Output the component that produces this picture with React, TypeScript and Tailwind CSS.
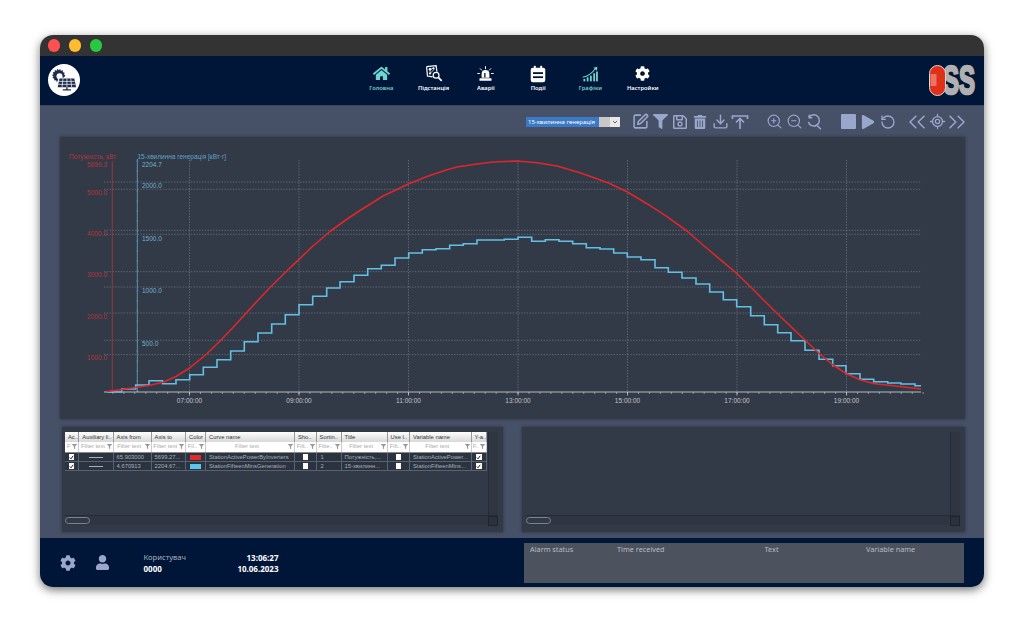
import React from "react";
import { FaCog, FaFilter, FaHome, FaPlay, FaRegSave, FaTrashAlt, FaUser } from "react-icons/fa";
import {
  ChevronsLeft,
  ChevronsRight,
  Download,
  LocateFixed,
  RotateCcw,
  SquarePen,
  ZoomIn,
  ZoomOut,
} from "lucide-react";

// Nav icons that the icon packs don't have
const SubstationIcon = () => (
  <svg width="19" height="19" viewBox="0 0 22 22" fill="none" stroke="#fff">
    <path d="M3 3l11-1 1 7M3 3l1 11 6 1" strokeWidth="1.4" />
    <circle cx="7" cy="6" r="1.5" fill="#fff" stroke="none" />
    <circle cx="11" cy="5" r="1.3" fill="#fff" stroke="none" />
    <circle cx="7" cy="11" r="1.3" fill="#fff" stroke="none" />
    <path d="M7 6l4-1M7 6l0 5M7 11l5-5" strokeWidth="0.8" />
    <circle cx="14" cy="13" r="3.4" strokeWidth="1.4" />
    <path d="M16.5 15.5l4 4" strokeWidth="2" />
  </svg>
);

const SirenIcon = () => (
  <svg width="19" height="19" viewBox="0 0 22 22" fill="#fff" stroke="none">
    <path d="M6.5 16v-4.5a4.5 4.5 0 0 1 9 0V16z" />
    <rect x="4" y="16.5" width="14" height="3" rx="0.5" />
    <path d="M11 2.5v3.5M4.5 5l2.4 2.4M17.5 5l-2.4 2.4M1.5 11h3M17.5 11h3" stroke="#fff" strokeWidth="1.1" />
    <path d="M9.5 10.5h1.5v5h-1.5z" fill="#001638" />
  </svg>
);

const EventsIcon = () => (
  <svg width="20" height="20" viewBox="0 0 22 22">
    <rect x="3" y="4" width="16" height="16" rx="2.4" fill="#fff" />
    <rect x="6.5" y="2" width="2" height="4" rx="0.6" fill="#fff" />
    <rect x="13.5" y="2" width="2" height="4" rx="0.6" fill="#fff" />
    <rect x="5.5" y="9" width="11" height="2" fill="#001638" />
    <rect x="5.5" y="13.5" width="11" height="2" fill="#001638" />
  </svg>
);

const GraphIcon = () => (
  <svg width="18" height="18" viewBox="0 0 22 22">
    <rect x="3" y="17" width="2.2" height="3" fill="#6fd3cf" />
    <rect x="7" y="15" width="2.2" height="5" fill="#6fd3cf" />
    <rect x="11" y="13" width="2.2" height="7" fill="#6fd3cf" />
    <rect x="15" y="10" width="2.2" height="10" fill="#6fd3cf" />
    <rect x="18.4" y="8" width="2.2" height="12" fill="#6fd3cf" />
    <path d="M2 15c6-1 11-4 16-11" fill="none" stroke="#6fd3cf" strokeWidth="1.3" />
    <path d="M15 3.5l5-1.5-.5 5z" fill="#6fd3cf" />
  </svg>
);

const SolarLogo = () => (
  <svg width="32" height="32" viewBox="0 0 32 32">
    <circle cx="10.7" cy="11.5" r="5.6" fill="#1c2c4c" />
    <circle cx="10.7" cy="11.5" r="5.6" fill="none" stroke="#1c2c4c" strokeWidth="1.6" strokeDasharray="1.2 1.2" />
    <circle cx="11.5" cy="12.3" r="3" fill="#fff" />
    <path d="M10.5 13.5h16.5l2.2 10.5H8.3z" fill="#fff" />
    <path d="M11.5 14.5h14.8l1.8 8.7H9.7z" fill="#1c2c4c" />
    <path d="M10.8 17.4h15.8M10.2 20.3h17M15 14.5l-1 8.7M18.9 14.5v8.7M22.7 14.5l1 8.7" stroke="#fff" strokeWidth="0.7" />
    <path d="M18.2 23.2h1.4v2.2h-1.4zM14.8 25.2h8.2v1.2h-8.2z" fill="#1c2c4c" />
  </svg>
);

const OssLogo = () => (
  <svg width="46" height="32" viewBox="0 0 46 32" className="overflow-visible">
    <text
      transform="translate(14 29) scale(0.6 1)"
      fontSize="40"
      fontWeight="700"
      fontFamily="'Liberation Sans', sans-serif"
      fill="#b0b0b0"
      stroke="#b0b0b0"
      strokeWidth="2.6"
    >
      SS
    </text>
    <rect x="0.5" y="0.5" width="16" height="30" rx="8" fill="#e0301a" stroke="#d8d8d8" />
    <path d="M1.5 10h6M1.5 12h6M1.5 14h6M1.5 16h6M1.5 18h6M1.5 20h6" stroke="#f4b8a8" strokeWidth="1" />
  </svg>
);

const UploadIcon = () => (
  <svg width="18" height="18" viewBox="0 0 18 18" fill="none" stroke="#9ba6cc" strokeWidth="1.7">
    <path d="M1.5 6V3h15v3" />
    <path d="M9 16V6M5 9.5L9 5.5l4 4" />
  </svg>
);

const ZoomResetIcon = () => (
  <svg width="18" height="18" viewBox="0 0 18 18" fill="none" stroke="#9ba6cc" strokeWidth="1.5">
    <path d="M4 4.5A5.6 5.6 0 1 1 3.4 9" />
    <path d="M4.2 1.8v3h3" />
    <path d="M12.2 12.4l3.6 3.8" />
  </svg>
);

const navItems = [
  { label: "Головна", icon: <FaHome size={17} color="#6fd3cf" />, active: true },
  { label: "Підстанція", icon: <SubstationIcon /> },
  { label: "Аварії", icon: <SirenIcon /> },
  { label: "Події", icon: <EventsIcon /> },
  { label: "Графіки", icon: <GraphIcon />, active: true },
  { label: "Настройки", icon: <FaCog size={15} color="#fff" /> },
];

const TOOL = "#9ba6cc";
const ToolButton = ({ children }: { children: React.ReactNode }) => (
  <div className="w-[20px] h-[20px] flex items-center justify-center">{children}</div>
);

const Toolbar = () => (
  <div className="h-[31px] flex items-center justify-end mr-[-2px] shrink-0">
    {/* curve selector */}
    <div className="w-[94px] h-[10px] bg-[#e8e8e8] flex items-center mr-[10px]">
      <span className="w-[73px] h-full bg-[#3a79c5] text-white text-[6px] leading-[10px] pl-[2px] whitespace-nowrap overflow-hidden">
        15-хвилинна генерація
      </span>
      <span className="w-[11px] h-full bg-[#c8c8c8]" />
      <svg width="10" height="10" viewBox="0 0 10 10" fill="none" stroke="#666">
        <path d="M3 4l2 2 2-2" />
      </svg>
    </div>
    <div className="flex items-center mr-[14px]">
      <ToolButton><SquarePen size={17} color={TOOL} strokeWidth={2.2} /></ToolButton>
      <ToolButton><FaFilter size={15} color={TOOL} /></ToolButton>
      <ToolButton><FaRegSave size={16} color={TOOL} /></ToolButton>
      <ToolButton><FaTrashAlt size={14} color={TOOL} /></ToolButton>
      <ToolButton><Download size={17} color={TOOL} strokeWidth={2} /></ToolButton>
      <ToolButton><UploadIcon /></ToolButton>
    </div>
    <div className="flex items-center mr-[14px]">
      <ToolButton><ZoomIn size={17} color={TOOL} strokeWidth={1.6} /></ToolButton>
      <ToolButton><ZoomOut size={17} color={TOOL} strokeWidth={1.6} /></ToolButton>
      <ToolButton><ZoomResetIcon /></ToolButton>
    </div>
    <div className="flex items-center mr-[9px]">
      <ToolButton><div className="w-[15px] h-[15px] bg-[#9ba6cc] rounded-[1px]" /></ToolButton>
      <ToolButton><FaPlay size={14} color={TOOL} /></ToolButton>
      <ToolButton><RotateCcw size={16} color={TOOL} strokeWidth={2} /></ToolButton>
    </div>
    <div className="flex items-center">
      <ToolButton><ChevronsLeft size={28} color={TOOL} strokeWidth={1.3} className="shrink-0" /></ToolButton>
      <ToolButton><LocateFixed size={17} color={TOOL} strokeWidth={1.8} /></ToolButton>
      <ToolButton><ChevronsRight size={28} color={TOOL} strokeWidth={1.3} className="shrink-0" /></ToolButton>
    </div>
  </div>
);

// chart data, in picture coordinates
const bluePoints: [number, number][] = [
  [107, 391], [121.7, 388], [135.7, 384], [149, 379.7], [162.5, 382.7], [176, 378.7], [189.7, 373.7],
  [203.3, 366.3], [217, 358.7], [230.7, 350], [244.3, 340.7], [258, 332], [271.7, 323], [285.3, 313.7],
  [299, 303.7], [312.7, 295.3], [326.7, 287], [340, 280.7], [354, 274.3], [367.7, 267.7], [381.3, 264.3],
  [395, 257], [408.7, 252], [422.3, 248.7], [436, 247.7], [449.7, 244.3], [463.3, 242.7], [477, 239],
  [490.7, 239], [504.3, 238.3], [518, 236.3], [531.7, 240.3], [545.3, 238.7], [559, 240.3], [572.7, 242.7],
  [586.3, 246.7], [600, 248], [613.7, 252], [627.3, 256], [641, 258.7], [655, 266.7], [668.3, 271.3],
  [682, 277], [696, 283], [709.7, 291], [723.3, 298.7], [736.7, 305.7], [750.7, 314.7], [764.3, 323.7],
  [777.7, 331.7], [791, 339.7], [805, 349.3], [819, 358.3], [832.7, 364.7], [846, 372.7], [860, 378.3],
  [873.7, 380.7], [887.7, 382], [901, 383], [915, 384.7],
];
const bluePath =
  bluePoints.map(([x, y], i) => (i === 0 ? `M${x} ${y}` : `H${x}V${y}`)).join("") + "H921";

const redPoints =
  "107,390.5 122,388.5 136.7,386.3 150,384.3 163,381.2 176,375.5 190,366.7 206.7,353 220,340 233,326.5 246.7,311.5 " +
  "256.7,300.5 270,286.5 286.7,270 299,258.3 313,245 330,230.5 345,219.5 360,209.5 368,204.5 383,195 397,188.5 " +
  "408.3,183 427,175.5 447,168.8 457,166 477,163 493,161 517,160 537,161.7 557,165 580,171.7 608,181.7 " +
  "627,190.7 647,202.7 667,215.7 687,230 703,244 720,258.3 737,272.7 753,288.3 763,298.5 785,320 805,339 819,352.5 " +
  "833,364 846.7,372.7 860,378.7 873,382.5 900,385.5 921,388";

const hours = [
  { x: 189.5, t: "07:00:00" },
  { x: 299, t: "09:00:00" },
  { x: 408.5, t: "11:00:00" },
  { x: 518, t: "13:00:00" },
  { x: 627.5, t: "15:00:00" },
  { x: 737, t: "17:00:00" },
  { x: 846.5, t: "19:00:00" },
];
const gridY = [181, 188.3, 229.3, 233.3, 270.7, 286, 312, 339.3, 353.6];
const redLabels = [
  { y: 165.5, t: "5699.3" },
  { y: 194, t: "5000.0" },
  { y: 235, t: "4000.0" },
  { y: 276, t: "3000.0" },
  { y: 317.5, t: "2000.0" },
  { y: 359, t: "1000.0" },
];
const blueLabels = [
  { y: 165.5, t: "2204.7" },
  { y: 186.5, t: "2000.0" },
  { y: 239.5, t: "1500.0" },
  { y: 292, t: "1000.0" },
  { y: 345, t: "500.0" },
];
const xTicks = Array.from({ length: 75 }, (_, i) => 112.9 + i * 10.95);
const axisTicks = Array.from({ length: 24 }, (_, i) => 160 + i * 10);

const Chart = () => (
  <div className="h-[282px] bg-[#333a47] shrink-0 shadow-[0_0_3px_rgba(30,35,45,0.6)]">
    <svg
      width="905"
      height="282"
      viewBox="60 136 905 282"
      fontFamily="'Liberation Sans', Arial, sans-serif"
      fontSize="6.5"
    >
      {gridY.map((y) => (
        <line key={y} x1="104" x2="921" y1={y} y2={y} stroke="#6a7280" strokeWidth="0.8" strokeDasharray="1.4 1.4" />
      ))}
      {hours.map((h) => (
        <line key={h.x} x1={h.x} x2={h.x} y1="159" y2="391" stroke="#6a7280" strokeWidth="0.8" strokeDasharray="1.4 1.4" />
      ))}
      <line x1="112.3" x2="112.3" y1="160" y2="391" stroke="#a8323a" strokeWidth="0.9" />
      <line x1="137.3" x2="137.3" y1="158" y2="391" stroke="#5c9fc0" strokeWidth="0.9" />
      {axisTicks.map((y) => (
        <line key={y} x1="136.3" x2="138.3" y1={y} y2={y} stroke="#5c9fc0" strokeWidth="0.5" />
      ))}
      <line x1="104" x2="921" y1="391" y2="391" stroke="#c4c8ce" strokeWidth="0.9" />
      {xTicks.map((x) => (
        <line key={x} x1={x} x2={x} y1="391" y2="393" stroke="#c4c8ce" strokeWidth="0.6" />
      ))}
      {hours.map((h) => (
        <line key={h.x} x1={h.x} x2={h.x} y1="391" y2="394.5" stroke="#c4c8ce" strokeWidth="0.8" />
      ))}

      <path d={bluePath} fill="none" stroke="#62c0e6" strokeWidth="1.6" />
      <polyline points={redPoints} fill="none" stroke="#e0262c" strokeWidth="1.6" strokeLinejoin="round" />

      <text x="69" y="157.5" fill="#b5343c">Потужність, кВт</text>
      <text x="137.5" y="157.5" fill="#5fa3c4">15-хвилинна генерація [кВт·г]</text>
      {redLabels.map((l) => (
        <text key={l.t} x="107" y={l.y} textAnchor="end" fill="#b5343c">{l.t}</text>
      ))}
      {blueLabels.map((l) => (
        <text key={l.t} x="142" y={l.y} fill="#6fb0cf">{l.t}</text>
      ))}
      {hours.map((h) => (
        <text key={h.t} x={h.x} y="402" textAnchor="middle" fill="#c0c4cc">{h.t}</text>
      ))}
    </svg>
  </div>
);

const COLS = "grid grid-cols-[14.3px_34.3px_38px_34.4px_20px_89px_21.6px_25px_46px_22.4px_61.6px_15.4px]";

const headers = ["Ac..", "Auxiliary li..", "Axis from", "Axis to", "Color", "Curve name", "Sho..", "Sortin..", "Title", "Use l..", "Variable name", "Y-a.."];
const filters = ["F", "Filter text", "Filter text", "Filter text", "Fil..", "Filter text", "Filt..", "Filte..", "Filter text", "Filt..", "Filter text", "F.."];

const Check = ({ on }: { on?: boolean }) => (
  <div className="w-[5.5px] h-[5.5px] bg-white flex items-center justify-center">
    {on && (
      <svg width="5" height="5" viewBox="0 0 5 5" fill="none" stroke="#222" strokeWidth="1">
        <path d="M0.8 2.5l1.2 1.3 2.2-3" />
      </svg>
    )}
  </div>
);

const rows = [
  {
    from: "65.903000",
    to: "5699.27...",
    color: "bg-[#e02a2a]",
    name: "StationActivePowerByInverters",
    sort: "1",
    title: "Потужність,...",
    variable: "StationActivePower...",
  },
  {
    from: "4.670913",
    to: "2204.67...",
    color: "bg-[#5cc6ee]",
    name: "StationFifteenMinsGeneration",
    sort: "2",
    title: "15-хвилинн...",
    variable: "StationFifteenMins...",
  },
];

const CELL = "border-r border-[#5a6270] flex items-center overflow-hidden whitespace-nowrap";

const CurveTable = () => (
  <div className="w-[422px] text-[5.8px] font-['Liberation_Sans',sans-serif]">
    <div className={`${COLS} h-[10px] bg-gradient-to-b from-white to-[#d8d8d8] text-[#333]`}>
      {headers.map((h, i) => (
        <div key={i} className="border-r border-[#999] pl-[3px] overflow-hidden whitespace-nowrap leading-[10px]">
          {h}
        </div>
      ))}
    </div>
    <div className={`${COLS} h-[11.5px] bg-white text-[#aaa] border-b border-[#888]`}>
      {filters.map((f, i) => (
        <div key={i} className="border-r border-[#ccc] flex items-center pr-[1px] overflow-hidden whitespace-nowrap">
          <span className="flex-1 min-w-0 text-center overflow-hidden">{f}</span>
          <FaFilter size={5} color="#999" className="shrink-0" />
        </div>
      ))}
    </div>
    {rows.map((r) => (
      <div key={r.sort} className={`${COLS} h-[9px] bg-[#2b3240] text-[#a8b0bc] border-b border-[#5a6270]`}>
        <div className={`${CELL} justify-center`}><Check on /></div>
        <div className={`${CELL} justify-center`}><div className="w-[14px] h-px bg-[#a8b0bc]" /></div>
        <div className={`${CELL} pl-[3px]`}>{r.from}</div>
        <div className={`${CELL} pl-[3px]`}>{r.to}</div>
        <div className={`${CELL} justify-center`}><div className={`w-[11px] h-[5px] ${r.color}`} /></div>
        <div className={`${CELL} pl-[3px]`}>{r.name}</div>
        <div className={`${CELL} justify-center`}><Check /></div>
        <div className={`${CELL} pl-[4px]`}>{r.sort}</div>
        <div className={`${CELL} pl-[3px]`}>{r.title}</div>
        <div className={`${CELL} justify-center`}><Check /></div>
        <div className={`${CELL} pl-[3px]`}>{r.variable}</div>
        <div className={`${CELL} justify-center`}><Check on /></div>
      </div>
    ))}
  </div>
);

const ScrollPane = ({ className, children }: { className: string; children?: React.ReactNode }) => (
  <div className={`${className} h-[105px] bg-[#333a47] pt-[4.5px] pl-[3.5px] pr-[5px] pb-[7px] flex flex-col shadow-[0_0_3px_rgba(30,35,45,0.6)]`}>
    <div className="flex-1 flex min-h-0">
      <div className="flex-1 min-w-0">{children}</div>
      <div className="w-[10px] bg-[#2f3541] border-l border-[#262c37]" />
    </div>
    <div className="h-[10px] flex items-center bg-[#2f3541] border-t border-[#262c37]">
      <div className="flex-1 min-w-0">
        <div className="w-[25px] h-[7px] rounded-full border border-[#7d8491] bg-[#333a47]" />
      </div>
      <div className="w-[10px] h-[10px] bg-[#2c323d] border border-[#1f2530]" />
    </div>
  </div>
);

export default function App() {
  return (
    <div className="w-[1024px] h-[622px] bg-white pt-[35px] pl-[40px] overflow-hidden">
      <div className="w-[944px] h-[552px] rounded-[13px] overflow-hidden flex flex-col shadow-[0_3px_10px_rgba(0,0,0,0.55)] font-['Noto_Sans',sans-serif]">
        {/* Title bar */}
        <div className="h-[21px] bg-[#333333] flex items-center gap-[8.5px] pl-[7.5px] shrink-0">
          <div className="w-[12.5px] h-[12.5px] rounded-full bg-[#ff5050]" />
          <div className="w-[12.5px] h-[12.5px] rounded-full bg-[#febc2e]" />
          <div className="w-[12.5px] h-[12.5px] rounded-full bg-[#28c840]" />
        </div>

        {/* Header */}
        <div className="h-[49px] bg-[#001638] flex items-center justify-between pl-[7.5px] pr-[9.5px] shrink-0">
          <div className="w-[48px] pb-[2px]">
            <div className="w-[32px] h-[32px] rounded-full bg-white overflow-hidden">
              <SolarLogo />
            </div>
          </div>
          <div className="flex pb-[4px]">
            {navItems.map((n) => (
              <div key={n.label} className="w-[52.3px] flex flex-col items-center">
                <div className="h-[18px] flex items-center justify-center">{n.icon}</div>
                <span className={`text-[5.8px] leading-[10px] font-semibold whitespace-nowrap ${n.active ? "text-[#6fd3cf]" : "text-white"}`}>
                  {n.label}
                </span>
              </div>
            ))}
          </div>
          <OssLogo />
        </div>

        {/* Main */}
        <div className="h-[433px] bg-[#465066] flex flex-col pl-[20px] pr-[19px] border-t border-[#3a4558] shrink-0">
          <Toolbar />
          <Chart />
          <div className="flex justify-between pl-[1.5px] mt-[8px]">
            <ScrollPane className="w-[441px]">
              <CurveTable />
            </ScrollPane>
            <ScrollPane className="w-[443px]" />
          </div>
        </div>

        {/* Footer */}
        <div className="flex-1 bg-[#001638] flex items-center pl-[19.5px]">
          <FaCog size={16} color="#9ba6cc" />
          <FaUser size={15} color="#9ba6cc" className="ml-[19px]" />
          <div className="ml-[34px] w-[70px] text-[7.6px] leading-[11px]">
            <div className="text-[#a8aebd]">Користувач</div>
            <div className="text-white font-bold text-[8px]">0000</div>
          </div>
          <div className="w-[65px] text-[8px] leading-[11px] text-right font-bold text-white">
            <div>13:06:27</div>
            <div>10.06.2023</div>
          </div>
          <div className="ml-[245px] w-[440.5px] h-[40px] bg-[#4c525e] grid grid-cols-[87px_147.5px_101.5px_1fr] pl-[6.5px] pt-[1px] text-[7.3px] leading-[11px] text-[#b8bcc4]">
            <span>Alarm status</span>
            <span>Time received</span>
            <span>Text</span>
            <span>Variable name</span>
          </div>
        </div>
      </div>
    </div>
  );
}
